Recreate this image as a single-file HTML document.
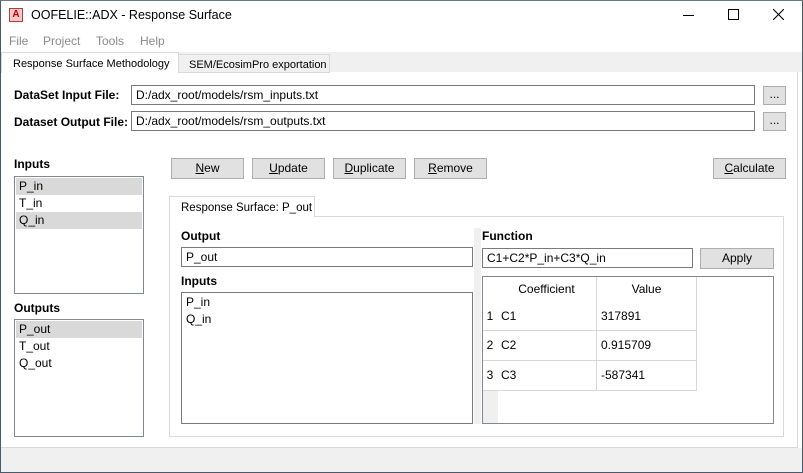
<!DOCTYPE html>
<html><head><style>
*{box-sizing:border-box;margin:0;padding:0}
body{width:803px;height:473px;overflow:hidden;font-family:"Liberation Sans",sans-serif;font-size:12px;color:#000;background:#fff;position:relative}
.a{position:absolute;white-space:nowrap}
.b{font-weight:bold}
.inp{position:absolute;border:1px solid #7a7a7a;background:#fff;padding:2px 4px;line-height:14px;white-space:nowrap}
.btn{position:absolute;border:1px solid #adadad;background:#e1e1e1;text-align:center;line-height:18px;white-space:nowrap}
.list{position:absolute;border:1px solid #828790;background:#fff;padding:1px}
.list div{height:17px;line-height:17px;padding-left:3px}
.sel{background:#d9d9d9}
.m{position:absolute;top:34px;color:#8a8a8a}
</style></head><body>
<div class="a" style="left:0;top:0;width:803px;height:473px;border:1px solid #4a5a6a;border-top-color:#6a7a8a"></div>
<div class="a" style="left:9px;top:8px;width:14px;height:14px;background:#f4c8c8;border:1px solid #b04040;color:#c00000;font-size:10px;line-height:12px;text-align:center;font-weight:bold">A</div>
<div class="a" style="left:31px;top:8px;font-size:12.5px">OOFELIE::ADX - Response Surface</div>
<div class="a" style="left:683px;top:15px;width:11px;height:1px;background:#000"></div>
<div class="a" style="left:728px;top:9px;width:11px;height:11px;border:1px solid #000"></div>
<svg class="a" style="left:773px;top:9px" width="11" height="11"><path d="M0 0L11 11M11 0L0 11" stroke="#000" stroke-width="1.1"/></svg>
<div class="m" style="left:9px">File</div>
<div class="m" style="left:43px">Project</div>
<div class="m" style="left:96px">Tools</div>
<div class="m" style="left:140px">Help</div>
<div class="a" style="left:1px;top:52px;width:801px;height:20px;background:#f0f0f0"></div>
<div class="a" style="left:1px;top:52px;width:178px;height:21px;background:#fff;border:1px solid #d9d9d9;border-bottom:none;padding:5px 0 0 11px;font-size:11px;overflow:hidden">Response Surface Methodology</div>
<div class="a" style="left:178px;top:54px;width:152px;height:19px;background:#f0f0f0;border:1px solid #d9d9d9;padding:4px 0 0 10px;font-size:11px;overflow:hidden">SEM/EcosimPro exportation</div>
<div class="a" style="left:1px;top:72px;width:797px;height:376px;border:1px solid #d9d9d9;border-left:none;border-top:none"></div>
<div class="a" style="left:1px;top:448px;width:801px;height:24px;background:#f0f0f0"></div>
<div class="a b" style="left:14px;top:88px">DataSet Input File:</div>
<div class="inp" style="left:131px;top:85px;width:624px;height:20px">D:/adx_root/models/rsm_inputs.txt</div>
<div class="btn" style="left:763px;top:86px;width:23px;height:19px;line-height:14px">...</div>
<div class="a b" style="left:14px;top:115px">Dataset Output File:</div>
<div class="inp" style="left:131px;top:111px;width:624px;height:20px">D:/adx_root/models/rsm_outputs.txt</div>
<div class="btn" style="left:763px;top:112px;width:23px;height:19px;line-height:14px">...</div>
<div class="a b" style="left:14px;top:157px">Inputs</div>
<div class="list" style="left:14px;top:176px;width:130px;height:118px"><div class="sel">P_in</div><div>T_in</div><div class="sel">Q_in</div></div>
<div class="a b" style="left:14px;top:301px">Outputs</div>
<div class="list" style="left:14px;top:319px;width:130px;height:118px"><div class="sel">P_out</div><div>T_out</div><div>Q_out</div></div>
<div class="btn" style="left:171px;top:158px;width:73px;height:21px"><u>N</u>ew</div>
<div class="btn" style="left:252px;top:158px;width:73px;height:21px"><u>U</u>pdate</div>
<div class="btn" style="left:333px;top:158px;width:73px;height:21px"><u>D</u>uplicate</div>
<div class="btn" style="left:414px;top:158px;width:73px;height:21px"><u>R</u>emove</div>
<div class="btn" style="left:713px;top:158px;width:73px;height:21px"><u>C</u>alculate</div>
<div class="a" style="left:169px;top:216px;width:615px;height:221px;border:1px solid #d9d9d9"></div>
<div class="a" style="left:169px;top:196px;width:146px;height:21px;background:#fff;border:1px solid #d9d9d9;border-bottom:none;padding:5px 0 0 11px;font-size:11.5px">Response Surface: P_out</div>
<div class="a b" style="left:181px;top:229px">Output</div>
<div class="inp" style="left:181px;top:247px;width:292px;height:20px">P_out</div>
<div class="a b" style="left:181px;top:274px">Inputs</div>
<div class="list" style="left:181px;top:292px;width:292px;height:132px;border-color:#7a7a7a"><div>P_in</div><div>Q_in</div></div>
<div class="a" style="left:474px;top:228px;width:7px;height:196px;background:#f0f0f0"></div>
<div class="a b" style="left:482px;top:229px">Function</div>
<div class="inp" style="left:482px;top:248px;width:211px;height:20px">C1+C2*P_in+C3*Q_in</div>
<div class="btn" style="left:700px;top:248px;width:74px;height:21px">Apply</div>
<div class="a" style="left:482px;top:276px;width:292px;height:148px;border:1px solid #828790;background:#fff"></div>
<div class="a" style="left:483px;top:277px;width:15px;height:146px;background:#f0f0f0"></div>
<div class="a" style="left:483px;top:277px;width:15px;height:113px;background:#fff"></div>
<div class="a" style="left:497px;top:277px;width:100px;height:25px;text-align:center;line-height:24px;border-right:1px solid #d8d8d8">Coefficient</div>
<div class="a" style="left:597px;top:277px;width:100px;height:25px;text-align:center;line-height:24px;border-right:1px solid #d8d8d8">Value</div>
<div class="a" style="left:483px;top:302px;width:214px;height:88px">
<div style="height:29px;display:flex;line-height:28px;border-bottom:1px solid #d8d8d8"><span style="width:14px;text-align:center">1</span><span style="width:100px;padding-left:4px;border-right:1px solid #d8d8d8">C1</span><span style="width:100px;padding-left:4px;border-right:1px solid #d8d8d8">317891</span></div>
<div style="height:30px;display:flex;line-height:29px;border-bottom:1px solid #d8d8d8"><span style="width:14px;text-align:center">2</span><span style="width:100px;padding-left:4px;border-right:1px solid #d8d8d8">C2</span><span style="width:100px;padding-left:4px;border-right:1px solid #d8d8d8">0.915709</span></div>
<div style="height:30px;display:flex;line-height:29px;border-bottom:1px solid #d8d8d8"><span style="width:14px;text-align:center">3</span><span style="width:100px;padding-left:4px;border-right:1px solid #d8d8d8">C3</span><span style="width:100px;padding-left:4px;border-right:1px solid #d8d8d8">-587341</span></div>
</div>
</body></html>
